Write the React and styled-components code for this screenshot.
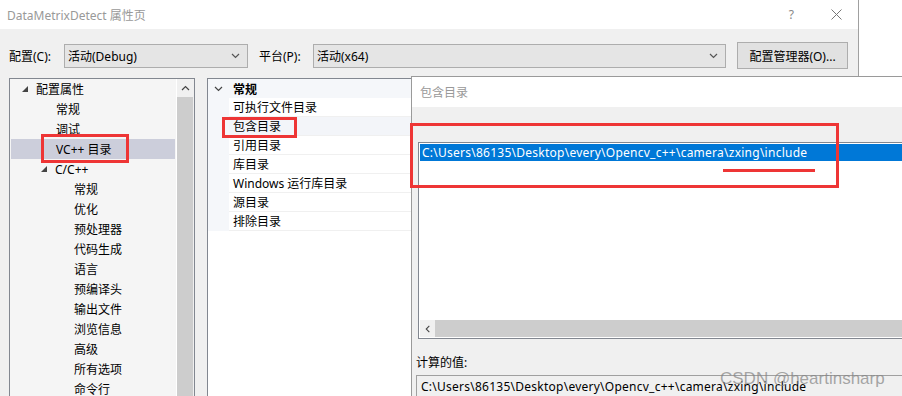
import React from "react";
import styled, { createGlobalStyle } from "styled-components";

const GlobalStyle = createGlobalStyle`
  html, body {
    margin: 0;
    padding: 0;
    background: #fff;
  }
  body {
    font-family: "Noto Sans", "Noto Sans CJK SC", sans-serif;
    font-size: 12px;
    color: #000;
  }
`;

const RED = "#ee3535";

const Screen = styled.div`
  position: relative;
  width: 902px;
  height: 396px;
  overflow: hidden;
  background: #fff;
`;

const Window = styled.div`
  width: 858px;
  height: 396px;
  border-right: 1px solid #a0a0a0;
  display: flex;
  flex-direction: column;
  background: #f0f0f0;
`;

const TitleBar = styled.div`
  height: 29px;
  flex: none;
  background: #fff;
  display: flex;
  align-items: center;
  padding: 0 16px 0 7px;
  color: #999;
`;

const TitleText = styled.span`
  flex: 1;
`;

const TitleButtons = styled.div`
  display: flex;
  align-items: center;
  gap: 37px;
  color: #888;
`;

const ConfigRow = styled.div`
  height: 27px;
  flex: none;
  margin: 13px 0 9px;
  display: flex;
  align-items: center;
  padding-left: 9px;
`;

const Label = styled.span`
  width: ${(p) => p.$w}px;
  flex: none;
`;

const Select = styled.div`
  width: ${(p) => p.$w}px;
  height: 24px;
  box-sizing: border-box;
  border: 1px solid #adadad;
  background: #e5e5e5;
  display: flex;
  align-items: center;
  padding: 0 7px 0 3px;
  margin-right: ${(p) => p.$mr}px;
  flex: none;
  span {
    flex: 1;
  }
`;

const Button = styled.div`
  width: 111px;
  height: 27px;
  box-sizing: border-box;
  border: 1px solid #adadad;
  background: #e1e1e1;
  display: flex;
  align-items: center;
  justify-content: center;
`;

const Panels = styled.div`
  flex: 1;
  display: flex;
  gap: 12px;
  padding-left: 9px;
  min-height: 0;
`;

const Tree = styled.div`
  width: 186px;
  flex: none;
  box-sizing: border-box;
  border: 1px solid #828790;
  border-bottom: none;
  background: #f5f5f5;
  display: flex;
`;

const TreeList = styled.div`
  flex: 1;
  padding: 0 1px;
`;

const TreeRow = styled.div`
  height: 20px;
  display: flex;
  align-items: center;
  padding-left: ${(p) => p.$pad}px;
  background: ${(p) => (p.$selected ? "#cccedb" : "transparent")};
  white-space: nowrap;
`;

const ArrowSlot = styled.span`
  width: 14px;
  flex: none;
  display: flex;
  align-items: center;
`;

const VScroll = styled.div`
  width: 17px;
  flex: none;
  background: #f0f0f0;
  display: flex;
  flex-direction: column;
  border-left: 1px solid #fff;
`;

const ScrollBtn = styled.div`
  height: 18px;
  flex: none;
  display: flex;
  align-items: center;
  justify-content: center;
`;

const ScrollThumb = styled.div`
  flex: 1;
  background: #cdcdcd;
  margin-right: 1px;
`;

const Grid = styled.div`
  flex: 1;
  margin-right: 11px;
  border: 1px solid #828790;
  border-bottom: none;
  background: #fff;
`;

const GridHeader = styled.div`
  height: 19px;
  display: flex;
  align-items: center;
  background: #f5f7fa;
  font-weight: 700;
  padding-left: 6px;
  span {
    margin-left: 10px;
  }
`;

const GridRow = styled.div`
  height: 19px;
  display: flex;
  background: ${(p) => (p.$active ? "#f3f5f9" : "#fff")};
`;

const GridMargin = styled.div`
  width: 21px;
  flex: none;
  background: #f5f7fa;
`;

const GridCell = styled.div`
  flex: 1;
  display: flex;
  align-items: center;
  padding-left: 4px;
  border-bottom: 1px solid #f0f0f0;
`;

const Dialog = styled.div`
  position: absolute;
  left: 411px;
  top: 76px;
  width: 520px;
  height: 340px;
  border: 1px solid #9a9a9a;
  background: #f0f0f0;
  display: flex;
  flex-direction: column;
`;

const DialogTitle = styled.div`
  height: 30px;
  flex: none;
  background: #fff;
  display: flex;
  align-items: center;
  padding-left: 8px;
  color: #999;
`;

const DialogBody = styled.div`
  flex: 1;
  padding: 35px 0 0 4px;
  display: flex;
  flex-direction: column;
`;

const ListBox = styled.div`
  margin-left: 2px;
  height: 197px;
  box-sizing: border-box;
  border: 1px solid #828790;
  background: #fff;
  display: flex;
  flex-direction: column;
  padding: 1px 0 1px 1px;
`;

const ListItem = styled.div`
  height: 17px;
  display: flex;
  align-items: center;
  padding-left: 2px;
  background: ${(p) => (p.$selected ? "#0078d7" : "transparent")};
  color: ${(p) => (p.$selected ? "#fff" : "#000")};
  white-space: nowrap;
  letter-spacing: 0.25px;
`;

const ListSpacer = styled.div`
  flex: 1;
`;

const HScroll = styled.div`
  height: 17px;
  flex: none;
  display: flex;
  background: #cdcdcd;
`;

const HScrollBtn = styled.div`
  width: 15px;
  background: #f0f0f0;
  display: flex;
  align-items: center;
  justify-content: center;
`;

const ValueLabel = styled.div`
  margin-top: 14px;
  height: 17px;
  display: flex;
  align-items: center;
`;

const ValueBox = styled.div`
  margin-top: 5px;
  height: 40px;
  box-sizing: border-box;
  border: 1px solid #a0a0a0;
  background: #f0f0f0;
  padding: 2px 0 0 4px;
  white-space: nowrap;
  letter-spacing: 0.25px;
`;

const Mark = styled.div`
  position: absolute;
  left: ${(p) => p.$x}px;
  top: ${(p) => p.$y}px;
  width: ${(p) => p.$w}px;
  height: ${(p) => p.$h}px;
  box-sizing: border-box;
  border: 3px solid ${RED};
  pointer-events: none;
`;

const Underline = styled.div`
  position: absolute;
  left: 723px;
  top: 169px;
  width: 92px;
  height: 3px;
  background: ${RED};
`;

const Watermark = styled.div`
  position: absolute;
  left: 720px;
  top: 369px;
  font-family: "Liberation Sans", Arial, sans-serif;
  font-size: 17px;
  color: rgba(130, 130, 130, 0.7);
  white-space: nowrap;
`;

const Chevron = ({ dir = "down", size = 9, color = "#555" }) => {
  const d =
    dir === "down" ? "M1 3 L4.5 6.5 L8 3" : dir === "up" ? "M1 6 L4.5 2.5 L8 6" : "M6 1 L2.5 4.5 L6 8";
  return (
    <svg width={size} height={size} viewBox="0 0 9 9">
      <path d={d} fill="none" stroke={color} strokeWidth="1.2" />
    </svg>
  );
};

const Triangle = () => (
  <svg width="6" height="6" viewBox="0 0 6 6">
    <polygon points="0,6 6,6 6,0" fill="#444" />
  </svg>
);

const CloseIcon = () => (
  <svg width="11" height="11" viewBox="0 0 11 11">
    <path d="M0.5 0.5 L10.5 10.5 M10.5 0.5 L0.5 10.5" stroke="#777" strokeWidth="1" />
  </svg>
);

const treeItems = [
  { text: "配置属性", pad: 11, open: true },
  { text: "常规", pad: 31 },
  { text: "调试", pad: 31 },
  { text: "VC++ 目录", pad: 31, selected: true },
  { text: "C/C++", pad: 30, open: true },
  { text: "常规", pad: 49 },
  { text: "优化", pad: 49 },
  { text: "预处理器", pad: 49 },
  { text: "代码生成", pad: 49 },
  { text: "语言", pad: 49 },
  { text: "预编译头", pad: 49 },
  { text: "输出文件", pad: 49 },
  { text: "浏览信息", pad: 49 },
  { text: "高级", pad: 49 },
  { text: "所有选项", pad: 49 },
  { text: "命令行", pad: 49 },
];

const gridRows = [
  "可执行文件目录",
  "包含目录",
  "引用目录",
  "库目录",
  "Windows 运行库目录",
  "源目录",
  "排除目录",
];

const path = "C:\\Users\\86135\\Desktop\\every\\Opencv_c++\\camera\\zxing\\include";

export default function App() {
  return (
    <Screen>
      <GlobalStyle />
      <Window>
        <TitleBar>
          <TitleText>DataMetrixDetect 属性页</TitleText>
          <TitleButtons>
            <span>?</span>
            <CloseIcon />
          </TitleButtons>
        </TitleBar>
        <ConfigRow>
          <Label $w={55}>配置(C):</Label>
          <Select $w={184} $mr={11}>
            <span>活动(Debug)</span>
            <Chevron />
          </Select>
          <Label $w={54}>平台(P):</Label>
          <Select $w={413} $mr={11}>
            <span>活动(x64)</span>
            <Chevron />
          </Select>
          <Button>配置管理器(O)...</Button>
        </ConfigRow>
        <Panels>
          <Tree>
            <TreeList>
              {treeItems.map((item, i) => (
                <TreeRow key={i} $pad={item.pad} $selected={item.selected}>
                  <ArrowSlot>{item.open && <Triangle />}</ArrowSlot>
                  {item.text}
                </TreeRow>
              ))}
            </TreeList>
            <VScroll>
              <ScrollBtn>
                <Chevron dir="up" color="#444" />
              </ScrollBtn>
              <ScrollThumb />
            </VScroll>
          </Tree>
          <Grid>
            <GridHeader>
              <Chevron color="#444" />
              <span>常规</span>
            </GridHeader>
            {gridRows.map((r) => (
              <GridRow key={r} $active={r === "包含目录"}>
                <GridMargin />
                <GridCell>{r}</GridCell>
              </GridRow>
            ))}
          </Grid>
        </Panels>
      </Window>

      <Dialog>
        <DialogTitle>包含目录</DialogTitle>
        <DialogBody>
          <ListBox>
            <ListItem $selected>{path}</ListItem>
            <ListSpacer />
            <HScroll>
              <HScrollBtn>
                <Chevron dir="left" size={8} color="#444" />
              </HScrollBtn>
            </HScroll>
          </ListBox>
          <ValueLabel>计算的值:</ValueLabel>
          <ValueBox>{path}</ValueBox>
        </DialogBody>
      </Dialog>

      <Mark $x={41} $y={134} $w={88} $h={29} />
      <Mark $x={222} $y={117} $w={75} $h={21} />
      <Mark $x={410} $y={123} $w={429} $h={65} />
      <Underline />
      <Watermark>CSDN @heartinsharp</Watermark>
    </Screen>
  );
}
